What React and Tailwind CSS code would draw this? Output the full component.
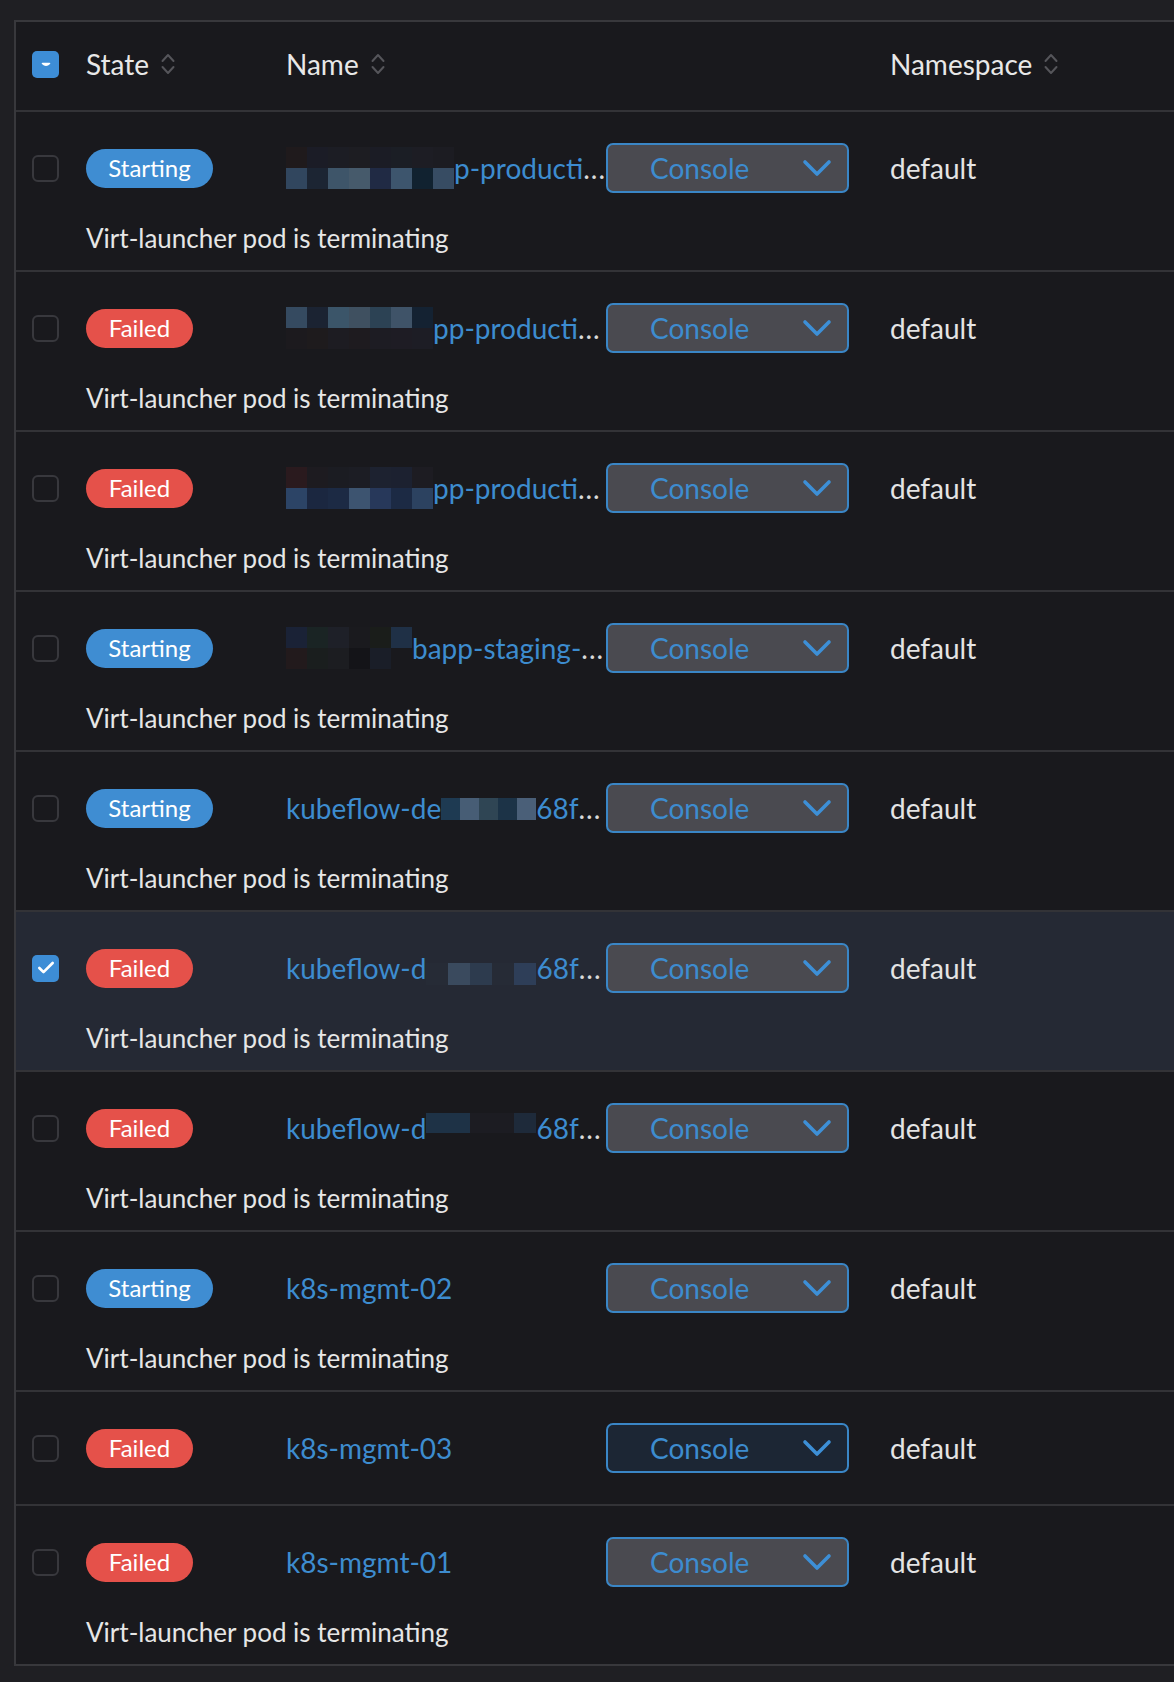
import { Check } from 'lucide-react';

const rows = [
  {
    state: 'Starting',
    desc: true,
    name: {
      before: '',
      mosaic: {
        top: ['bg-[#1f1a1c]', 'bg-[#1b1c26]', 'bg-[#1c1d24]', 'bg-[#1d1d22]', 'bg-[#1b1c25]', 'bg-[#1b1e25]', 'bg-[#1d1d24]', 'bg-[#1c1c22]'],
        bottom: ['bg-[#31465e]', 'bg-[#1c2533]', 'bg-[#3e5569]', 'bg-[#465a6b]', 'bg-[#202a44]', 'bg-[#3d556d]', 'bg-[#112230]', 'bg-[#374c63]'],
      },
      after: 'p-producti',
      ellipsis: true,
    },
  },
  {
    state: 'Failed',
    desc: true,
    name: {
      before: '',
      mosaic: {
        top: ['bg-[#354a60]', 'bg-[#1b2332]', 'bg-[#3b5569]', 'bg-[#3f5060]', 'bg-[#2c4254]', 'bg-[#3f5368]', 'bg-[#142232]'],
        bottom: ['bg-[#1c1a1e]', 'bg-[#1e1b1d]', 'bg-[#1d1c22]', 'bg-[#1e1b1f]', 'bg-[#1d1c23]', 'bg-[#1e1c24]', 'bg-[#1d1d25]'],
      },
      after: 'pp-producti',
      ellipsis: true,
    },
  },
  {
    state: 'Failed',
    desc: true,
    name: {
      before: '',
      mosaic: {
        top: ['bg-[#2a1a1e]', 'bg-[#1d1b20]', 'bg-[#1b1c22]', 'bg-[#1c1d24]', 'bg-[#1d2230]', 'bg-[#1c2130]', 'bg-[#1d1c22]'],
        bottom: ['bg-[#2c4466]', 'bg-[#1b2740]', 'bg-[#1c2a44]', 'bg-[#3d5470]', 'bg-[#27385a]', 'bg-[#1c2a44]', 'bg-[#2c4260]'],
      },
      after: 'pp-producti',
      ellipsis: true,
    },
  },
  {
    state: 'Starting',
    desc: true,
    name: {
      before: '',
      mosaic: {
        top: ['bg-[#1a2236]', 'bg-[#1a2424]', 'bg-[#1e2028]', 'bg-[#1a1a1e]', 'bg-[#1a1d1a]', 'bg-[#1f3046]'],
        bottom: ['bg-[#221a1c]', 'bg-[#1a1e1e]', 'bg-[#1c1d21]', 'bg-[#141418]', 'bg-[#1a1e28]', 'bg-[#19191d]'],
      },
      after: 'bapp-staging-',
      ellipsis: true,
    },
  },
  {
    state: 'Starting',
    desc: true,
    name: {
      before: 'kubeflow-de',
      mosaic: {
        single: ['bg-[#1e3a52]', 'bg-[#475d75]', 'bg-[#2f4554]', 'bg-[#1c3347]', 'bg-[#4a5f78]'],
        block: 'w-[19px] h-[22px]',
        shift: 'translate-y-[1px]',
      },
      after: '68f',
      ellipsis: true,
    },
  },
  {
    state: 'Failed',
    desc: true,
    selected: true,
    name: {
      before: 'kubeflow-d',
      mosaic: {
        single: ['bg-[#262b36]', 'bg-[#3a4a5e]', 'bg-[#2d3b4e]', 'bg-[#262b36]', 'bg-[#2e3e58]'],
        block: 'w-[22px] h-[22px]',
        shift: 'translate-y-[6px]',
      },
      after: '68f',
      ellipsis: true,
    },
  },
  {
    state: 'Failed',
    desc: true,
    name: {
      before: 'kubeflow-d',
      mosaic: {
        single: ['bg-[#1e3246]', 'bg-[#1e3246]', 'bg-[#1c1c22]', 'bg-[#1c1c22]', 'bg-[#1e2a3a]'],
        block: 'w-[22px] h-[20px]',
        shift: '-translate-y-[5px]',
      },
      after: '68f',
      ellipsis: true,
    },
  },
  { state: 'Starting', desc: true, name: { before: 'k8s-mgmt-02' } },
  { state: 'Failed', desc: false, focused: true, name: { before: 'k8s-mgmt-03' } },
  { state: 'Failed', desc: true, name: { before: 'k8s-mgmt-01' } },
];

function SortIcon() {
  return (
    <svg width="16" height="26" viewBox="0 0 16 26" fill="none" className="ml-[11px] shrink-0">
      <path d="M2.5 10 L8 4 L13.5 10" stroke="#55555a" strokeWidth="2" strokeLinecap="round" strokeLinejoin="round" />
      <path d="M2.5 16 L8 22 L13.5 16" stroke="#55555a" strokeWidth="2" strokeLinecap="round" strokeLinejoin="round" />
    </svg>
  );
}

function Checkbox({ checked, indeterminate }) {
  if (indeterminate) {
    return (
      <div className="flex items-center justify-center w-[27px] h-[27px] rounded-[5px] bg-[#3d8dd6]">
        <svg width="14" height="14" viewBox="0 0 14 14">
          <path d="M3.5 6.5 Q7 10 10.5 6.5 Z" fill="#ffffff" stroke="#ffffff" strokeWidth="1.6" strokeLinejoin="round" />
        </svg>
      </div>
    );
  }
  if (checked) {
    return (
      <div className="flex items-center justify-center w-[27px] h-[27px] rounded-[5px] bg-[#3d8dd6]">
        <Check size={20} strokeWidth={3.2} className="text-white" />
      </div>
    );
  }
  return <div className="w-[27px] h-[27px] rounded-[6px] border-2 border-[#38383d]" />;
}

function Badge({ state }) {
  const starting = state === 'Starting';
  return (
    <span
      className={
        starting
          ? 'inline-flex items-center justify-center h-[39px] w-[127px] rounded-full bg-[#3f8dd2] text-white text-[24px]'
          : 'inline-flex items-center justify-center h-[39px] w-[107px] rounded-full bg-[#e5514a] text-white text-[24px]'
      }
    >
      {state}
    </span>
  );
}

function Mosaic({ mosaic }) {
  if (mosaic.single) {
    return (
      <span className={`flex shrink-0 ${mosaic.shift}`}>
        {mosaic.single.map((c, i) => (
          <span key={i} className={`block ${mosaic.block} ${c}`} />
        ))}
      </span>
    );
  }
  return (
    <span className="flex flex-col shrink-0">
      <span className="flex">
        {mosaic.top.map((c, i) => (
          <span key={i} className={`block w-[21px] h-[21px] ${c}`} />
        ))}
      </span>
      <span className="flex">
        {mosaic.bottom.map((c, i) => (
          <span key={i} className={`block w-[21px] h-[21px] ${c}`} />
        ))}
      </span>
    </span>
  );
}

function NameCell({ name }) {
  return (
    <div className="flex items-center w-[320px] overflow-hidden whitespace-nowrap text-[28px] text-[#3d8ccf]">
      {name.before && <span>{name.before}</span>}
      {name.mosaic && <Mosaic mosaic={name.mosaic} />}
      {name.after && <span>{name.after}</span>}
      {name.ellipsis && <span className="text-[#d9d9d9] tracking-[1px]">...</span>}
    </div>
  );
}

function ConsoleButton({ focused }) {
  return (
    <button
      className={
        focused
          ? 'flex items-center justify-between w-[243px] h-[50px] pl-[42px] pr-[15px] rounded-[7px] border-2 border-[#3a86c6] bg-[#1c2634]'
          : 'flex items-center justify-between w-[243px] h-[50px] pl-[42px] pr-[15px] rounded-[7px] border-2 border-[#3a86c6] bg-[#4a4a50]'
      }
    >
      <span className="text-[28px] text-[#3d8ccf]">Console</span>
      <svg width="30" height="18" viewBox="0 0 30 18" fill="none">
        <path d="M3 3 L15 15 L27 3" stroke="#3d8fd6" strokeWidth="3.6" strokeLinecap="round" strokeLinejoin="round" />
      </svg>
    </button>
  );
}

function Row({ row, last }) {
  return (
    <div
      className={`${row.selected ? 'bg-[#252934]' : 'bg-[#19191d]'} ${last ? '' : 'border-b-2 border-[#333337]'} pt-[31px] ${row.desc ? 'pb-[17px]' : 'pb-[31px]'}`}
    >
      <div className="flex items-center h-[50px] pl-[16px]">
        <div className="w-[54px] shrink-0">
          <Checkbox checked={row.selected} />
        </div>
        <div className="w-[200px] shrink-0">
          <Badge state={row.state} />
        </div>
        <NameCell name={row.name} />
        <ConsoleButton focused={row.focused} />
        <div className="ml-[41px] text-[28px] text-[#e4e4e4]">default</div>
      </div>
      {row.desc && (
        <div className="mt-[30px] h-[30px] pl-[70px] flex items-center text-[26px] text-[#e6e6e6] whitespace-nowrap">
          Virt-launcher pod is terminating
        </div>
      )}
    </div>
  );
}

export default function App() {
  return (
    <div
      className="min-h-screen bg-[#1f1f23] pt-[20px] pl-[14px] overflow-hidden"
      style={{ fontFamily: 'Lato, "Open Sans", "Liberation Sans", sans-serif' }}
    >
      <div className="border-l-2 border-t-2 border-b-2 border-[#38383c] bg-[#19191d]">
        {/* Header */}
        <div className="flex items-center h-[90px] pl-[16px] pb-[4px] border-b-2 border-[#333337] text-[28px] text-[#e8e8e8]">
          <div className="w-[54px] shrink-0">
            <Checkbox indeterminate />
          </div>
          <div className="w-[200px] shrink-0 flex items-center">
            State
            <SortIcon />
          </div>
          <div className="w-[604px] shrink-0 flex items-center">
            Name
            <SortIcon />
          </div>
          <div className="flex items-center">
            Namespace
            <SortIcon />
          </div>
        </div>

        {rows.map((row, i) => (
          <Row key={i} row={row} last={i === rows.length - 1} />
        ))}
      </div>
    </div>
  );
}
